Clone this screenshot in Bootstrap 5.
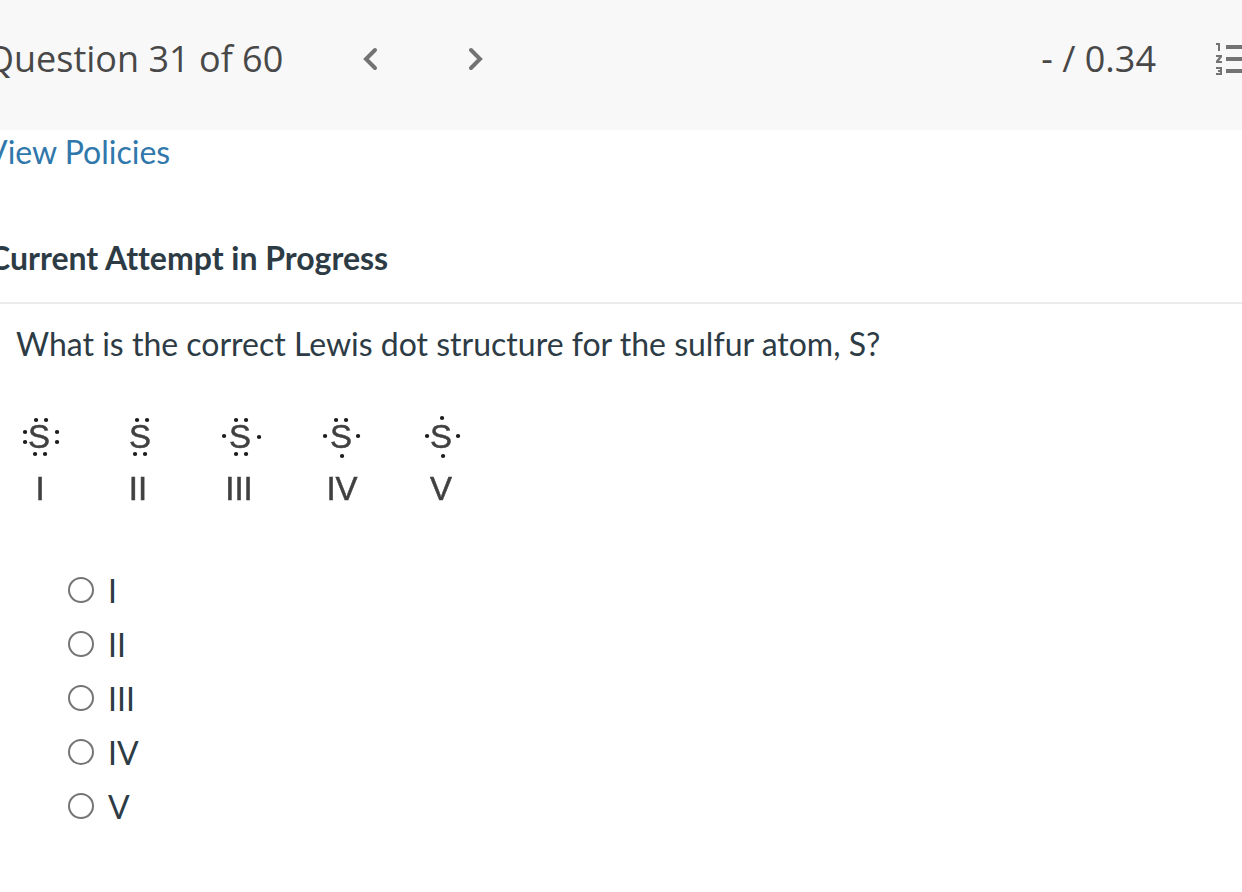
<!DOCTYPE html>
<html lang="en">
<head>
<meta charset="utf-8">
<meta name="viewport" content="width=device-width, initial-scale=1">
<title>Question 31 of 60</title>
<link href="https://cdn.jsdelivr.net/npm/bootstrap@5.3.0/dist/css/bootstrap.min.css" rel="stylesheet">
<style>
  body { font: 400 32px/44px Lato, "Liberation Sans", sans-serif; color: #2d3b45; overflow-x: hidden; }
  .quiz { margin: 0 -12px 0 -14px; }
  .quiz-bar { height: 130px; padding-bottom: 12px; background: #f8f8f8; color: #484848; font-family: "Open Sans", "Liberation Sans", sans-serif; }
  .quiz-bar .bar-text { font-size: 36px; white-space: nowrap; }
  .bar-nav { margin-left: 70px; gap: 69px; }
  .icon-btn { padding: 0; border: 0; line-height: 0; border-radius: 0; }
  .score { margin-right: 60px; }
  .policies { color: #3078ab; text-decoration: none; }
  .attempt { margin: 62px 0 0; padding: 0 0 22px 3px; border-bottom: 2px solid #ebebeb; font-size: 32px; line-height: 44px; font-weight: 700; font-variant-ligatures: none; }
  .question { padding: 18px 30px 0; }
  .lewis { margin-top: 38px; width: 480px; height: 108px; }
  .lewis text { font: 33px "Liberation Sans", sans-serif; fill: #404040; text-anchor: middle; }
  .choices { margin-top: 51px; padding-left: 52px; }
  .choice { height: 54px; gap: 14px; }
  .choice label { padding-top: 2px; }
  .choice .form-check-input { width: 26px; height: 26px; margin: 0; border: 2px solid #757575; }
</style>
<script src="https://cdn.jsdelivr.net/npm/bootstrap@5.3.0/dist/js/bootstrap.bundle.min.js" defer></script>
</head>
<body>
<div class="quiz">
  <header class="quiz-bar d-flex align-items-center">
    <span class="bar-text">Question 31 of 60</span>
    <nav class="bar-nav d-flex" aria-label="Questions">
      <button class="btn icon-btn" type="button" aria-label="Previous question">
        <svg width="36" height="36" fill="none" stroke="#737373" stroke-width="4"><path d="M22 9 13 18 22 27" stroke-linecap="round"/></svg>
      </button>
      <button class="btn icon-btn" type="button" aria-label="Next question">
        <svg width="36" height="36" fill="none" stroke="#737373" stroke-width="4"><path d="M13 9 22 18 13 27" stroke-linecap="round"/></svg>
      </button>
    </nav>
    <span class="bar-text score ms-auto">- / 0.34</span>
    <button class="btn icon-btn" type="button" aria-label="Question list">
      <svg width="38" height="36" fill="#737373"><path d="M10 4h28v4H10zm0 12h28v4H10zm0 12h28v4H10z"/><path d="M0 2h4v8H2V4H0zM0 14h6v2l-3 4h3v2H0v-2l3-4H0zM0 26h6v8H0v-2h4v-1H2v-2h2v-1H0z"/></svg>
    </button>
  </header>
  <main>
    <div class="policy-row"><a class="policies" href="#">View Policies</a></div>
    <h1 class="attempt">Current Attempt in Progress</h1>
    <section class="question">
      <p class="m-0" id="prompt">What is the correct Lewis dot structure for the sulfur atom, S?</p>
      <svg class="lewis d-block" viewBox="16 404 480 108" role="img" aria-label="Five Lewis dot structures">
        <filter id="soft"><feGaussianBlur stdDeviation="0.7"/></filter>
        <g filter="url(#soft)">
          <g stroke="#404040" stroke-width="0.5">
            <text x="39" y="448">S</text><text x="140" y="448">S</text><text x="240" y="448">S</text><text x="341" y="448">S</text><text x="441" y="448">S</text>
            <text x="40" y="500">I</text><text x="138" y="500">II</text><text x="239" y="500">III</text><text x="342" y="500">IV</text><text x="441" y="500">V</text>
          </g>
          <path fill="none" stroke="#1c1c1c" stroke-width="4.2" stroke-linecap="round" d="M36 420h.1M46 420h.1M25 432h.1M25 442h.1M57 432h.1M57 442h.1M35 454h.1M45 454h.1
            M137 420h.1M147 420h.1M135 454h.1M145 454h.1
            M236 420h.1M246 420h.1M224 436h.1M259 437h.1M236 454h.1M246 454h.1
            M336 420h.1M346 420h.1M325 436h.1M358 436h.1M342 456h.1
            M442 418h.1M427 436h.1M458 436h.1M443 456h.1"/>
        </g>
      </svg>
      <div class="choices" role="radiogroup" aria-labelledby="prompt">
        <div class="choice d-flex align-items-center"><input class="form-check-input" type="radio" name="answer" id="a1"><label for="a1">I</label></div>
        <div class="choice d-flex align-items-center"><input class="form-check-input" type="radio" name="answer" id="a2"><label for="a2">II</label></div>
        <div class="choice d-flex align-items-center"><input class="form-check-input" type="radio" name="answer" id="a3"><label for="a3">III</label></div>
        <div class="choice d-flex align-items-center"><input class="form-check-input" type="radio" name="answer" id="a4"><label for="a4">IV</label></div>
        <div class="choice d-flex align-items-center"><input class="form-check-input" type="radio" name="answer" id="a5"><label for="a5">V</label></div>
      </div>
    </section>
  </main>
</div>
</body>
</html>
